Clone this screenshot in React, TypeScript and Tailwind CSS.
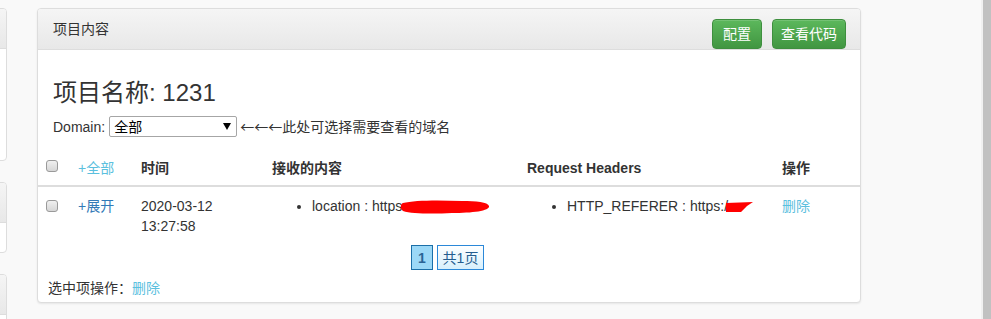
import React from "react";

function SideCard({ bodyH }: { bodyH: number }) {
  return (
    <div className="w-[200px] ml-[-193px] shrink-0 bg-white border border-[#dddddd] rounded-[4px] overflow-hidden">
      <div className="h-[40px] bg-gradient-to-b from-[#f5f5f5] to-[#e8e8e8] border-b border-[#dddddd]" />
      <div style={{ height: bodyH }} />
    </div>
  );
}

function Check() {
  return (
    <div className="w-[12px] h-[12px] rounded-[3px] border border-[#9a9a9a] bg-gradient-to-b from-[#f0f0f0] to-[#d6d6d6]" />
  );
}

export default function App() {
  return (
    <div className="w-[991px] h-[319px] bg-[#f9f9f9] flex overflow-hidden font-['Liberation_Sans','Noto_Sans_CJK_SC',sans-serif] text-[14px] leading-[20px] text-[#333333]">
      <div className="w-[7px] shrink-0 overflow-hidden pt-[8px] flex flex-col gap-[21px]">
        <SideCard bodyH={111} />
        <SideCard bodyH={29} />
        <SideCard bodyH={120} />
      </div>

      <div className="ml-[30px] mt-[8px] w-[824px] h-[295px] shrink-0 bg-white border border-[#dddddd] rounded-[4px] shadow-[0_1px_2px_rgba(0,0,0,0.08)] flex flex-col overflow-hidden">
        <div className="h-[40px] shrink-0 bg-gradient-to-b from-[#f5f5f5] to-[#e8e8e8] border-b border-[#dddddd] box-content flex justify-between pl-[15px] pr-[14px]">
          <div className="self-center">项目内容</div>
          <div className="self-end flex gap-[10px]">
            <div className="w-[50px] h-[30px] rounded-[4px] border border-[#3e8f3e] bg-gradient-to-b from-[#5cb85c] to-[#419641] text-white flex items-center justify-center shadow-[inset_0_1px_0_rgba(255,255,255,0.15)]">
              配置
            </div>
            <div className="w-[74px] h-[30px] rounded-[4px] border border-[#3e8f3e] bg-gradient-to-b from-[#5cb85c] to-[#419641] text-white flex items-center justify-center shadow-[inset_0_1px_0_rgba(255,255,255,0.15)]">
              查看代码
            </div>
          </div>
        </div>

        <div className="pl-[15px] mt-[30px] text-[24px] leading-[26px]">项目名称: 1231</div>

        <div className="pl-[15px] mt-[10px] h-[21px] flex items-center">
          <span>Domain:</span>
          <div className="ml-[4px] w-[128px] h-[21px] border border-[#a6a6a6] rounded-[2px] flex items-center justify-between pl-[4px] pr-[5px] text-black">
            <span>全部</span>
            <svg width="8" height="7" viewBox="0 0 8 7">
              <path d="M0 0 L8 0 L4 7 Z" fill="#000" />
            </svg>
          </div>
          <span className="ml-[3px]">
            <span className="font-['Noto_Sans_CJK_SC',sans-serif]">←←←</span>此处可选择需要查看的域名
          </span>
        </div>

        <div className="mt-[13px] grid grid-cols-[32px_63px_131px_255px_255px_86px] h-[35px] border-b-2 border-[#dddddd] box-content font-bold">
          <div className="pl-[8px] pt-[10px]">
            <Check />
          </div>
          <div className="pl-[8px] pt-[8px] font-normal text-[#5bc0de]">+全部</div>
          <div className="pl-[8px] pt-[8px]">时间</div>
          <div className="pl-[8px] pt-[8px]">接收的内容</div>
          <div className="pl-[8px] pt-[8px]">Request Headers</div>
          <div className="pl-[8px] pt-[8px]">操作</div>
        </div>

        <div className="grid grid-cols-[32px_63px_131px_255px_255px_86px] h-[57px]">
          <div className="pl-[8px] pt-[13px]">
            <Check />
          </div>
          <div className="pl-[8px] pt-[9px] text-[#337ab7]">+展开</div>
          <div className="pl-[8px] pt-[9px]">
            2020-03-12
            <br />
            13:27:58
          </div>
          <div className="pl-[8px] pt-[9px]">
            <ul className="list-disc pl-[40px]">
              <li className="whitespace-nowrap">
                location : https
                <svg width="90" height="14" viewBox="0 0 90 14" className="inline-block align-middle ml-[-2px]">
                  <path
                    d="M3 3 C14 0 40 0 62 1 C76 1 88 2 89 6 C90 11 72 13 52 13 C34 14 12 14 3 11 C0 9 0 4 3 3 Z"
                    fill="#ff0000"
                  />
                </svg>
              </li>
            </ul>
          </div>
          <div className="pl-[8px] pt-[9px]">
            <ul className="list-disc pl-[40px]">
              <li className="whitespace-nowrap">
                HTTP_REFERER : https:/
                <svg width="27" height="11" viewBox="0 0 27 11" className="inline-block align-middle ml-[-2px]">
                  <path d="M0 1 L27 0 L21 4 L15 10 L0 10 Z" fill="#ff0000" />
                </svg>
              </li>
            </ul>
          </div>
          <div className="pl-[8px] pt-[9px] text-[#5bc0de]">删除</div>
        </div>

        <div className="mt-[1px] flex justify-center gap-[4px] pr-[3px]">
          <div className="w-[22px] h-[25px] border border-[#1b6fa8] bg-[#9bd8f7] text-[#2a6496] font-bold flex items-center justify-center">
            1
          </div>
          <div className="w-[47px] h-[25px] border border-[#2b88d8] bg-gradient-to-b from-white to-[#d6effc] text-[#245d8f] flex items-center justify-center">
            共1页
          </div>
        </div>

        <div className="mt-[8px] pl-[10px]">
          选中项操作：<span className="text-[#5bc0de]">删除</span>
        </div>
      </div>

      <div className="flex-1" />
      <div className="w-[2px] bg-[#f0f0f0]" />
      <div className="w-[8px] bg-[#c1c1c1]" />
    </div>
  );
}
